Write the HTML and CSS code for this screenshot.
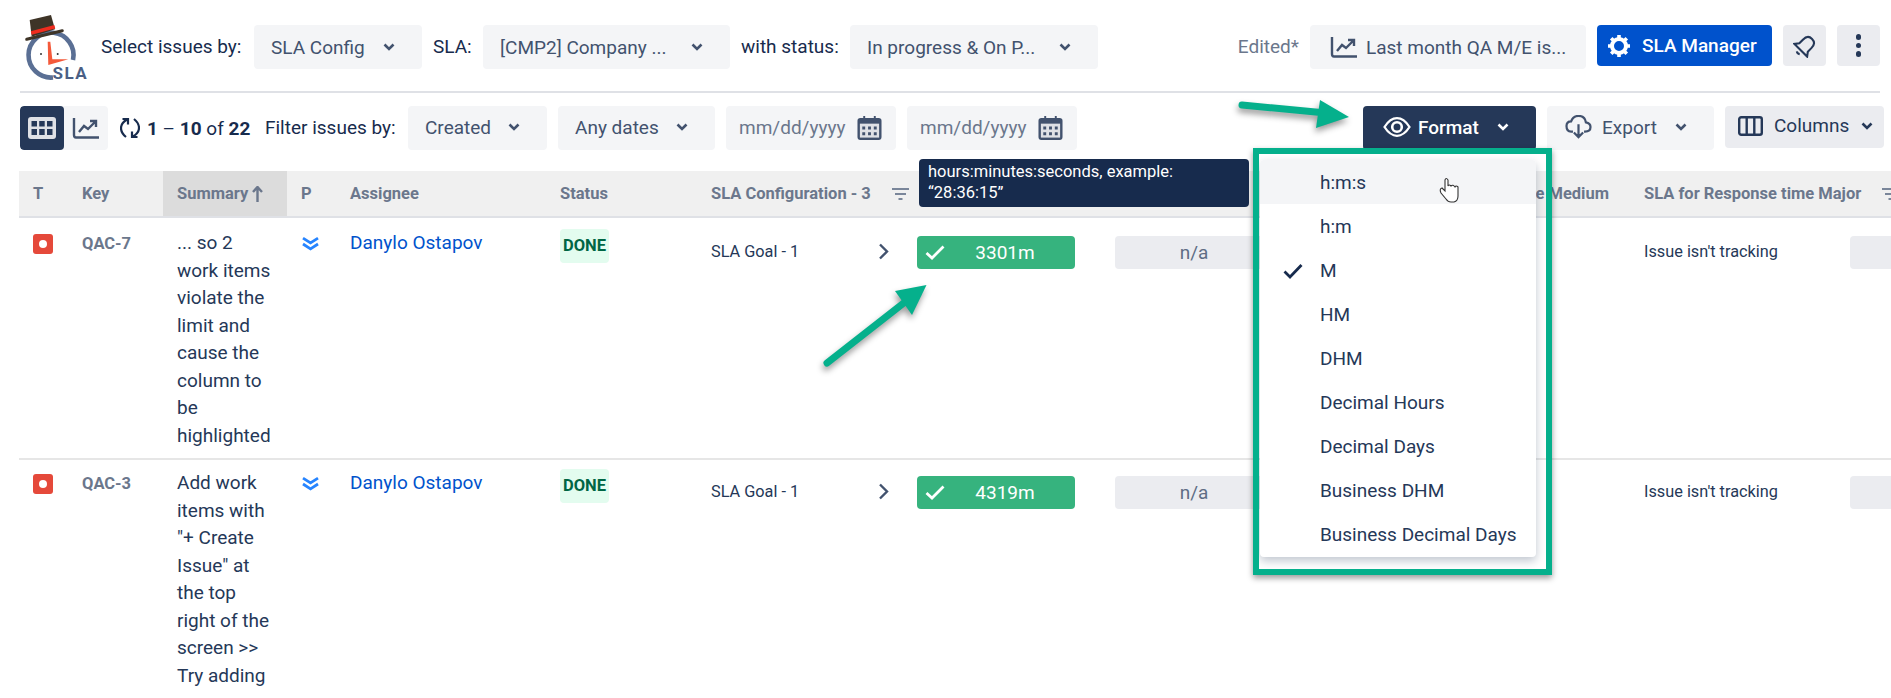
FILE: index.html
```html
<!DOCTYPE html>
<html lang="en">
<head>
    <meta charset="UTF-8">
    <title>SLA report</title>
    <link rel="stylesheet" href="styles.css">
</head>
<body>
<div class="topbar">
    <svg class="logo" width="68" height="65" viewBox="0 0 68 65">
        <path d="M53 45 A22.5 22.5 0 1 0 33 62.5" fill="none" stroke="#5a6f94" stroke-width="4.6"/>
        <path d="M9.7 5 L31 0 L35 14.3 L11.7 21.7 Z" fill="#3e3427"/>
        <path d="M11.2 18 L34.8 11.8" stroke="#f02c1e" stroke-width="3.6"/>
        <path d="M6.7 24.3 L42.3 15.7" stroke="#3e3427" stroke-width="3" stroke-linecap="round"/>
        <path d="M27.7 26.7 L30.3 26.7 L32.3 44.3 L48.3 44.3 L28.3 50 Z" fill="#f4593a"/>
        <circle cx="21" cy="39" r="1" fill="#333"/>
        <circle cx="37.7" cy="39" r="1" fill="#333"/>
        <text class="logo-text" x="32.5" y="64">SLA</text>
    </svg>
    <span class="label label-select">Select issues by:</span>
    <div class="btn btn-config">SLA Config<svg class="chev" viewBox="0 0 12 8"><path d="M1.5 1.5 L6 6 L10.5 1.5"/></svg></div>
    <span class="label label-sla">SLA:</span>
    <div class="btn btn-sla">[CMP2] Company ...<svg class="chev" viewBox="0 0 12 8"><path d="M1.5 1.5 L6 6 L10.5 1.5"/></svg></div>
    <span class="label label-status">with status:</span>
    <div class="btn btn-status">In progress &amp; On P...<svg class="chev" viewBox="0 0 12 8"><path d="M1.5 1.5 L6 6 L10.5 1.5"/></svg></div>
    <span class="edited">Edited*</span>
    <div class="btn btn-saved">
        <svg width="28" height="22" viewBox="0 0 28 22"><path d="M2 1 V18 Q2 20.5 4 20.5 H27 M7 15 L12 9 L16 12 L24 4 M18 4 H24 V10" fill="none" stroke="#42526e" stroke-width="2.4"/></svg>
        Last month QA M/E is...
    </div>
    <div class="btn-manager">
        <svg width="24" height="24" viewBox="0 0 24 24"><circle cx="12" cy="12" r="7" fill="none" stroke="#fff" stroke-width="4"/><path d="M12 1 V5 M12 19 V23 M1 12 H5 M19 12 H23 M4.2 4.2 L7 7 M17 17 L19.8 19.8 M4.2 19.8 L7 17 M17 7 L19.8 4.2" stroke="#fff" stroke-width="3.6"/></svg>
        SLA Manager
    </div>
    <div class="btn-square">
        <svg width="24" height="24" viewBox="0 0 24 24"><g transform="rotate(45 12 12)"><path d="M12 2 Q6 2 6 9 V14 L3 18 H21 L18 14 V9 Q18 2 12 2 Z M10 21.5 Q12 23 14 21.5" fill="none" stroke="#253858" stroke-width="2.1"/></g></svg>
    </div>
    <div class="btn-square btn-dots">
        <i></i><i></i><i></i>
    </div>
</div>

<div class="toolbar">
    <div class="toggle">
        <div class="toggle-on">
            <svg width="28" height="22" viewBox="0 0 28 22"><rect width="28" height="22" rx="3" fill="#dfe1e6"/><path d="M3.5 4 h5.5 v5.5 h-5.5z M11.2 4 h5.5 v5.5 h-5.5z M19 4 h5.5 v5.5 h-5.5z M3.5 12 h5.5 v6 h-5.5z M11.2 12 h5.5 v6 h-5.5z M19 12 h5.5 v6 h-5.5z" fill="#253858"/></svg>
        </div>
        <div class="toggle-off">
            <svg width="28" height="22" viewBox="0 0 28 22"><path d="M2 1 V18 Q2 20.5 4 20.5 H27 M7 15 L12 9 L16 12 L24 4 M18 4 H24 V10" fill="none" stroke="#42526e" stroke-width="2.4"/></svg>
        </div>
    </div>
    <svg class="refresh" width="20" height="20" viewBox="0 0 20 20"><path d="M6 19 Q1 15 1 10 Q1 5 7 1.5 M2.5 1 H8 V6.5 M14 1 Q19 5 19 10 Q19 15 13 18.5 M17.5 19 H12 V13.5" fill="none" stroke="#172b4d" stroke-width="2.2"/></svg>
    <span class="paging"><b>1</b> – <b>10</b> of <b>22</b></span>
    <span class="label-filter">Filter issues by:</span>
    <div class="btn btn-created">Created<svg class="chev" viewBox="0 0 12 8"><path d="M1.5 1.5 L6 6 L10.5 1.5"/></svg></div>
    <div class="btn btn-dates">Any dates<svg class="chev" viewBox="0 0 12 8"><path d="M1.5 1.5 L6 6 L10.5 1.5"/></svg></div>
    <div class="btn btn-date">mm/dd/yyyy
        <svg width="25" height="25" viewBox="0 0 25 26"><path d="M3 3 H6 V1 H8 V3 H17 V1 H19 V3 H22 Q25 3 25 6 V23 Q25 26 22 26 H3 Q0 26 0 23 V6 Q0 3 3 3 Z" fill="#42526e"/><path d="M2.5 9 H22.5 V23.5 H2.5 Z" fill="#dfe1e6"/><path d="M5 12 h3 v3 h-3z M11 12 h3 v3 h-3z M17 12 h3 v3 h-3z M5 18 h3 v3 h-3z M11 18 h3 v3 h-3z M17 18 h3 v3 h-3z" fill="#42526e"/></svg>
    </div>
    <div class="btn btn-date">mm/dd/yyyy
        <svg width="25" height="25" viewBox="0 0 25 26"><path d="M3 3 H6 V1 H8 V3 H17 V1 H19 V3 H22 Q25 3 25 6 V23 Q25 26 22 26 H3 Q0 26 0 23 V6 Q0 3 3 3 Z" fill="#42526e"/><path d="M2.5 9 H22.5 V23.5 H2.5 Z" fill="#dfe1e6"/><path d="M5 12 h3 v3 h-3z M11 12 h3 v3 h-3z M17 12 h3 v3 h-3z M5 18 h3 v3 h-3z M11 18 h3 v3 h-3z M17 18 h3 v3 h-3z" fill="#42526e"/></svg>
    </div>
    <div class="btn btn-format">
        <svg width="28" height="20" viewBox="0 0 28 20"><path d="M1.5 10 C6 3 10 1.2 14 1.2 C18 1.2 22 3 26.5 10 C22 17 18 18.8 14 18.8 C10 18.8 6 17 1.5 10 Z" fill="none" stroke="#fff" stroke-width="2.3"/><circle cx="14" cy="10" r="4.8" fill="none" stroke="#fff" stroke-width="2.6"/></svg>
        Format<svg class="chev" viewBox="0 0 12 8"><path d="M1.5 1.5 L6 6 L10.5 1.5"/></svg>
    </div>
    <div class="btn btn-export">
        <svg width="27" height="24" viewBox="0 0 28 26"><path d="M8 18 H6 Q1 18 1 12 Q1 7 6 7 Q8 1 14 1 Q21 1 22 8 Q27 9 27 13 Q27 18 21 18 H20 M14 10 V24 M9 19 L14 24 L19 19" fill="none" stroke="#42526e" stroke-width="2.4"/></svg>
        Export<svg class="chev" viewBox="0 0 12 8"><path d="M1.5 1.5 L6 6 L10.5 1.5"/></svg>
    </div>
    <div class="btn btn-columns">
        <svg width="25" height="20" viewBox="0 0 25 20"><rect x="1.2" y="1.2" width="22.6" height="17.6" rx="2" fill="none" stroke="#253858" stroke-width="2.4"/><path d="M8.7 1 V19 M16.3 1 V19" stroke="#253858" stroke-width="2.4"/></svg>
        Columns<svg class="chev" viewBox="0 0 12 8"><path d="M1.5 1.5 L6 6 L10.5 1.5"/></svg>
    </div>
</div>

<div class="table">
    <div class="row row-head">
        <div class="cell">T</div>
        <div class="cell">Key</div>
        <div class="cell cell-sorted">Summary <svg width="11" height="16" viewBox="0 0 11 16"><path d="M5.5 16 V2 M1 6 L5.5 1 L10 6" fill="none" stroke="#6b778c" stroke-width="2.4"/></svg></div>
        <div class="cell">P</div>
        <div class="cell">Assignee</div>
        <div class="cell">Status</div>
        <div class="cell cell-nowrap">SLA Configuration - 3<svg class="filter" width="17" height="14" viewBox="0 0 17 14"><path d="M0 2 H17 M3 7 H14 M6.5 12 H10.5" stroke="#7a869a" stroke-width="2"/></svg></div>
        <div class="cell"></div>
        <div class="cell"></div>
        <div class="cell cell-end">SLA for Response time Medium</div>
        <div class="cell cell-nowrap">SLA for Response time Major<svg class="filter" width="17" height="14" viewBox="0 0 17 14"><path d="M0 2 H17 M3 7 H14 M6.5 12 H10.5" stroke="#7a869a" stroke-width="2"/></svg></div>
    </div>

    <div class="row row-issue">
        <div class="cell"><span class="type-icon"></span></div>
        <div class="cell issue-key">QAC-7</div>
        <div class="cell summary">... so 2 work items violate the limit and cause the column to be highlighted</div>
        <div class="cell"><svg class="prio" width="19" height="15" viewBox="0 0 17 14"><path d="M1.5 2 L8.5 6.5 L15.5 2 M1.5 7.5 L8.5 12 L15.5 7.5" fill="none" stroke="#2684ff" stroke-width="2.6"/></svg></div>
        <div class="cell assignee">Danylo Ostapov</div>
        <div class="cell"><span class="done">DONE</span></div>
        <div class="cell goal">SLA Goal - 1<svg width="11" height="17" viewBox="0 0 11 17"><path d="M2 1.5 L9 8.5 L2 15.5" fill="none" stroke="#42526e" stroke-width="2.4"/></svg></div>
        <div class="cell"><div class="met"><svg width="20" height="15" viewBox="0 0 20 15"><path d="M1.5 8 L7 13 L18.5 1.5" fill="none" stroke="#fff" stroke-width="2.8"/></svg><span>3301m</span></div></div>
        <div class="cell"><div class="na">n/a</div></div>
        <div class="cell"></div>
        <div class="cell goal goal-track">Issue isn't tracking<div class="na na-cut"></div></div>
    </div>

    <div class="row row-issue">
        <div class="cell"><span class="type-icon"></span></div>
        <div class="cell issue-key">QAC-3</div>
        <div class="cell summary">Add work items with "+ Create Issue" at the top right of the screen &gt;&gt; Try adding</div>
        <div class="cell"><svg class="prio" width="19" height="15" viewBox="0 0 17 14"><path d="M1.5 2 L8.5 6.5 L15.5 2 M1.5 7.5 L8.5 12 L15.5 7.5" fill="none" stroke="#2684ff" stroke-width="2.6"/></svg></div>
        <div class="cell assignee">Danylo Ostapov</div>
        <div class="cell"><span class="done">DONE</span></div>
        <div class="cell goal">SLA Goal - 1<svg width="11" height="17" viewBox="0 0 11 17"><path d="M2 1.5 L9 8.5 L2 15.5" fill="none" stroke="#42526e" stroke-width="2.4"/></svg></div>
        <div class="cell"><div class="met"><svg width="20" height="15" viewBox="0 0 20 15"><path d="M1.5 8 L7 13 L18.5 1.5" fill="none" stroke="#fff" stroke-width="2.8"/></svg><span>4319m</span></div></div>
        <div class="cell"><div class="na">n/a</div></div>
        <div class="cell"></div>
        <div class="cell goal goal-track">Issue isn't tracking<div class="na na-cut"></div></div>
    </div>
</div>

<div class="tooltip">hours:minutes:seconds, example: “28:36:15”</div>

<div class="menu">
    <div class="menu-item menu-hover">h:m:s</div>
    <div class="menu-item">h:m</div>
    <div class="menu-item">
        <svg class="menu-check" width="20" height="16" viewBox="0 0 20 16"><path d="M1.5 8.5 L7 14 L18.5 2" fill="none" stroke="#172b4d" stroke-width="2.8"/></svg>
        M
    </div>
    <div class="menu-item">HM</div>
    <div class="menu-item">DHM</div>
    <div class="menu-item">Decimal Hours</div>
    <div class="menu-item">Decimal Days</div>
    <div class="menu-item">Business DHM</div>
    <div class="menu-item">Business Decimal Days</div>
</div>
<div class="highlight"></div>

<!-- annotation arrows and the mouse pointer -->
<svg class="overlay" width="1891" height="698" viewBox="0 0 1891 698">
    <g class="arrow">
        <path d="M1242 105 L1326 113" stroke="#05b08c" stroke-width="7" stroke-linecap="round"/>
        <path d="M1320 100 L1349 117 L1316 128 Z" fill="#05b08c"/>
        <path d="M827 363 L905 302" stroke="#05b08c" stroke-width="7" stroke-linecap="round"/>
        <path d="M895 291 L926.5 285 L912 315 Z" fill="#05b08c"/>
    </g>
    <path d="M1445 180 V191 L1442 188 Q1439 189 1441 193 L1446 199 Q1448 202 1451 202 H1454 Q1458 201 1458 196 V187 Q1456 185 1455 187 Q1453 184 1451 186 Q1449 184 1448 186 V180 Q1446 177 1445 180 Z" fill="#fff" stroke="#333" stroke-width="1.1"/>
</svg>
</body>
</html>
```

FILE: styles.css
```css
* {
    box-sizing: border-box;
}

body {
    margin: 0;
    position: relative;
    width: 1891px;
    height: 698px;
    overflow: hidden;
    background: #fff;
    color: #172b4d;
    font-family: Roboto, "Liberation Sans", sans-serif;
    font-size: 19px;
}

svg {
    flex: none;
}

/* top bar */
.topbar {
    display: flex;
    align-items: flex-start;
    height: 93px;
    margin: 0 11px 0 20px;
    padding-top: 15px;
    border-bottom: 2px solid #dfe1e6;
}

.logo {
    overflow: visible;
}

.logo-text {
    font-family: Roboto, sans-serif;
    font-size: 17px;
    font-weight: 700;
    fill: #4a5f85;
    letter-spacing: 1.5px;
}

.label {
    margin: 10px 11px 0 0;
    line-height: 44px;
    white-space: nowrap;
}

.label-select {
    width: 142px;
    margin-left: 13px;
}

.label-sla {
    width: 39px;
}

.label-status {
    width: 98px;
}

.btn {
    display: flex;
    align-items: center;
    height: 44px;
    border-radius: 4px;
    background: #f4f5f7;
    color: #42526e;
    white-space: nowrap;
    padding: 0 27px 0 17px;
}

.topbar .btn {
    margin: 10px 11px 0 0;
}

.chev {
    width: 12px;
    height: 8px;
    margin-left: auto;
    fill: none;
    stroke: currentColor;
    stroke-width: 2.6;
}

.btn-config {
    width: 168px;
}

.btn-sla {
    width: 247px;
}

.btn-status {
    width: 248px;
}

.edited {
    margin: 10px 11px 0 auto;
    line-height: 44px;
    color: #6b778c;
}

.btn-saved {
    width: 276px;
    gap: 8px;
    padding-left: 20px;
}

.btn-manager {
    display: flex;
    align-items: center;
    gap: 11px;
    width: 175px;
    height: 41px;
    margin: 10px 11px 0 0;
    padding-left: 10px;
    border-radius: 4px;
    background: #0052cc;
    color: #fff;
    font-weight: 500;
}

.btn-square {
    display: flex;
    align-items: center;
    justify-content: center;
    width: 43px;
    height: 41px;
    margin: 10px 11px 0 0;
    border-radius: 4px;
    background: #ebecf0;
}

.btn-dots {
    flex-direction: column;
    gap: 3px;
    margin-right: 0;
}

.btn-dots i {
    width: 5.5px;
    height: 5.5px;
    border-radius: 50%;
    background: #253858;
}

/* second row */
.toolbar {
    display: flex;
    align-items: center;
    height: 44px;
    margin: 13px 7px 0 20px;
}

.toggle {
    display: flex;
    width: 88px;
    height: 44px;
    border-radius: 4px;
    overflow: hidden;
    background: #f4f5f7;
}

.toggle-on {
    display: flex;
    align-items: center;
    justify-content: center;
    width: 44px;
    background: #253858;
    border-radius: 4px;
}

.toggle-off {
    display: flex;
    align-items: center;
    justify-content: center;
    width: 44px;
}

.refresh {
    margin: 0 7px 0 12px;
}

.paging {
    width: 118px;
    white-space: nowrap;
}

.paging b {
    font-weight: 700;
}

.label-filter {
    width: 143px;
    padding-bottom: 2px;
    white-space: nowrap;
}

.toolbar .btn {
    margin-right: 11px;
    padding-bottom: 2px;
}

.btn-created {
    width: 139px;
}

.btn-dates {
    width: 157px;
}

.btn-date {
    width: 170px;
    color: #6b778c;
    padding: 0 14px 0 13px;
    justify-content: space-between;
}

.btn-format {
    width: 173px;
    margin-left: auto;
    gap: 7px;
    padding-left: 20px;
    background: #253858;
    color: #fff;
    font-weight: 500;
}

.btn-export {
    width: 167px;
    gap: 10px;
    padding-left: 18px;
}

.btn-columns {
    width: 159px;
    height: 42px;
    margin: -3px 0 0 0 !important;
    gap: 11px;
    padding: 0 11px 2px 13px;
    background: #ebecf0;
    color: #253858;
}

/* table */
.table {
    margin: 21px 0 0 19px;
    width: 2100px;
}

.row {
    display: grid;
    grid-template-columns: 49px 95px 124px 49px 210px 151px 208px 199px 186px 340px 300px;
}

.row-head {
    height: 47px;
    background: #f0f0f0;
    border-bottom: 2px solid #dfe1e6;
    font-size: 16.5px;
    font-weight: 700;
    color: #6b778c;
}

.row-head .cell {
    display: flex;
    align-items: center;
    padding-left: 14px;
}

.row-head .cell-sorted {
    gap: 4px;
    background: #dcdcdc;
}

.row-head .cell-nowrap,
.row-head .cell-end {
    white-space: nowrap;
}

.row-head .cell-end {
    justify-content: flex-end;
    padding-right: 21px;
}

.filter {
    margin-left: 21px;
}

.row-issue {
    height: 240px;
    box-shadow: 0 2px 0 #e6e6e6;
}

.cell {
    padding-left: 14px;
}

.row-issue .cell {
    padding-top: 11px;
}

.type-icon {
    display: flex;
    align-items: center;
    justify-content: center;
    width: 20px;
    height: 20px;
    margin-top: 5px;
    border-radius: 3px;
    background: #e5493a;
}

.type-icon::after {
    content: "";
    width: 8px;
    height: 8px;
    border-radius: 50%;
    background: #fff;
}

.issue-key {
    font-size: 16.5px;
    font-weight: 700;
    line-height: 30px;
    color: #6b778c;
}

.summary {
    padding-right: 13px;
    line-height: 27.5px;
    color: #253858;
}

.prio {
    margin-top: 7px;
}

.assignee {
    line-height: 28px;
    color: #0052cc;
}

.done {
    display: inline-block;
    height: 34px;
    padding: 0 3px;
    border-radius: 4px;
    background: #e3fcef;
    color: #006644;
    font-size: 16.5px;
    font-weight: 700;
    line-height: 34px;
}

.row-issue .goal {
    display: flex;
    align-items: flex-start;
    justify-content: space-between;
    padding-top: 0;
    padding-right: 16px;
    font-size: 16.3px;
    line-height: 68px;
    color: #253858;
    white-space: nowrap;
}

.goal svg {
    margin-top: 25px;
}

.row-issue .goal-track {
    justify-content: flex-start;
    gap: 72px;
    padding-right: 0;
}

.met {
    display: flex;
    align-items: center;
    width: 158px;
    height: 33px;
    margin: 7px 0 0 -2px;
    padding-left: 8px;
    border-radius: 4px;
    background: #36b37e;
    color: #fff;
}

.met span {
    flex: 1;
    padding-right: 10px;
    text-align: center;
}

.na {
    width: 158px;
    height: 33px;
    margin: 7px 0 0 -3px;
    border-radius: 4px;
    background: #ebecf0;
    color: #5e6c84;
    line-height: 33px;
    text-align: center;
}

.na-cut {
    flex: none;
    margin: 18px 0 0 0;
}

/* things lying over the table */
.tooltip {
    position: absolute;
    left: 919px;
    top: 159px;
    width: 330px;
    height: 48px;
    padding: 3px 70px 0 9px;
    border-radius: 4px;
    background: #172b4d;
    color: #fff;
    font-size: 16.5px;
    line-height: 20.5px;
}

.menu {
    position: absolute;
    left: 1260px;
    top: 160px;
    width: 276px;
    height: 397px;
    padding-bottom: 1px;
    border-radius: 4px;
    background: #fff;
    color: #253858;
    box-shadow: 0 4px 10px rgba(9, 30, 66, .25);
    overflow: hidden;
}

.menu-item {
    position: relative;
    height: 44px;
    padding-left: 60px;
    line-height: 46px;
    white-space: nowrap;
}

.menu-hover {
    background: #f4f5f7;
}

.menu-check {
    position: absolute;
    left: 23px;
    top: 15px;
}

.highlight {
    position: absolute;
    left: 1253px;
    top: 148px;
    width: 299px;
    height: 427px;
    border: 6px solid #05b08c;
    box-shadow: 0 3px 6px rgba(0, 0, 0, .4);
    pointer-events: none;
}

.overlay {
    position: absolute;
    left: 0;
    top: 0;
    pointer-events: none;
}

.arrow {
    filter: drop-shadow(-1px 4px 3px rgba(0, 0, 0, .4));
}
```
